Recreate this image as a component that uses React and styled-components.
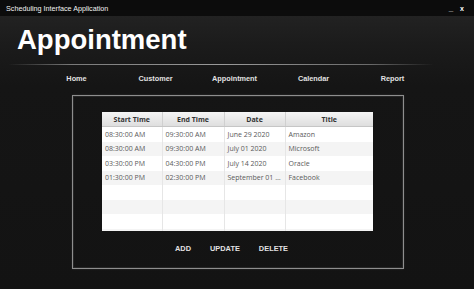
import React from "react"
import styled, { createGlobalStyle } from "styled-components"

const GlobalStyle = createGlobalStyle`
  html, body {
    margin: 0;
    padding: 0;
    background: #131313;
  }
`;

const Window = styled.div`
  width: 474px;
  height: 289px;
  display: flex;
  flex-direction: column;
  overflow: hidden;
  font-family: "Liberation Sans", Arial, sans-serif;
`;

const TitleBar = styled.div`
  height: 16px;
  flex: none;
  display: flex;
  align-items: center;
  justify-content: space-between;
  padding: 0 10px 0 6px;
  background: #0c0c0c;
  color: #f2f2f2;
  font-size: 7.2px;
`;

const WinButtons = styled.div`
  display: flex;
  align-items: center;
  gap: 7px;
`;

const WinButton = styled.span`
  color: #fff;
  font-weight: bold;
  font-size: ${({ size }) => size || 8}px;
  line-height: 1;
  position: relative;
  top: ${({ drop }) => drop || 0}px;
`;

const Main = styled.div`
  flex: 1;
  display: flex;
  flex-direction: column;
  background: linear-gradient(#222222 0px, #1b1b1b 30px, #151515 70px, #131313 100%);
`;

const Heading = styled.h1`
  margin: 10px 0 0 17px;
  font-size: 27.5px;
  line-height: 28px;
  font-weight: bold;
  color: #fff;
`;

const Divider = styled.div`
  height: 1px;
  margin: 10px 40px 0 8px;
  background: linear-gradient(90deg, rgba(130,130,130,0) 0%, #7a7a7a 15%, #9a9a9a 50%, #6a6a6a 85%, rgba(100,100,100,0) 100%);
`;

const Nav = styled.nav`
  margin: 9px 0 0 37px;
  display: grid;
  grid-template-columns: repeat(5, 79px);
`;

const NavItem = styled.a`
  text-align: center;
  font-size: 7.3px;
  line-height: 10px;
  font-weight: bold;
  color: #e2e2e2;
  text-decoration: none;
`;

const Panel = styled.div`
  margin: 11px 0 0 72px;
  width: 332px;
  height: 174px;
  box-sizing: border-box;
  border: 1px solid #8e8e8e;
  box-shadow: inset 0 0 0 1px #262626, 0 0 2px rgba(255,255,255,0.12);
  padding: 16px 30px 0 29px;
  display: flex;
  flex-direction: column;
`;

const TableBox = styled.div`
  height: 119px;
  background: #fff;
  overflow: hidden;
`;

const Table = styled.table`
  width: 100%;
  border-collapse: collapse;
  table-layout: fixed;
  font-family: "Open Sans", "Noto Sans", sans-serif;
`;

const Th = styled.th`
  height: 14px;
  padding: 0;
  font-size: 7px;
  font-weight: bold;
  color: #333;
  text-align: center;
  background: linear-gradient(#f4f4f4, #dedede);
  border-right: 1px solid #d0d0d0;
  border-bottom: 1px solid #c6c6c6;
  &:last-child { border-right: none; }
`;

const Row = styled.tr`
  background: ${({ odd }) => (odd ? "#f4f4f4" : "#ffffff")};
`;

const Td = styled.td`
  height: 14.5px;
  padding: 0 1px 0 3px;
  font-size: 7px;
  color: #5a5a5a;
  white-space: nowrap;
  overflow: hidden;
  text-overflow: ellipsis;
  border-right: 1px solid #e6e6e6;
  &:last-child { border-right: none; }
`;

const Actions = styled.div`
  display: flex;
  gap: 19px;
  padding-left: 73px;
  margin-top: 13px;
`;

const Action = styled.button`
  background: none;
  border: none;
  padding: 0;
  font-family: "Liberation Sans", Arial, sans-serif;
  font-size: 7.4px;
  line-height: 10px;
  font-weight: bold;
  color: #e2e2e2;
`;

const appointments = [
  ["08:30:00 AM", "09:30:00 AM", "June 29 2020", "Amazon"],
  ["08:30:00 AM", "09:30:00 AM", "July 01 2020", "Microsoft"],
  ["03:30:00 PM", "04:30:00 PM", "July 14 2020", "Oracle"],
  ["01:30:00 PM", "02:30:00 PM", "September 01 2020", "Facebook"],
];

const emptyRows = 4;

export default function App() {
  const rows = [...appointments, ...Array(emptyRows).fill(["", "", "", ""])];
  return (
    <>
      <GlobalStyle />
      <Window>
        <TitleBar>
          <span>Scheduling Interface Application</span>
          <WinButtons>
            <WinButton drop={1}>_</WinButton>
            <WinButton size={7}>x</WinButton>
          </WinButtons>
        </TitleBar>
        <Main>
          <Heading>Appointment</Heading>
          <Divider />
          <Nav>
            <NavItem>Home</NavItem>
            <NavItem>Customer</NavItem>
            <NavItem>Appointment</NavItem>
            <NavItem>Calendar</NavItem>
            <NavItem>Report</NavItem>
          </Nav>
          <Panel>
            <TableBox>
              <Table>
                <colgroup>
                  <col style={{ width: 60 }} />
                  <col style={{ width: 62 }} />
                  <col style={{ width: 61 }} />
                  <col />
                </colgroup>
                <thead>
                  <tr>
                    <Th>Start Time</Th>
                    <Th>End Time</Th>
                    <Th>Date</Th>
                    <Th>Title</Th>
                  </tr>
                </thead>
                <tbody>
                  {rows.map((r, i) => (
                    <Row key={i} odd={i % 2 === 1}>
                      {r.map((c, j) => (
                        <Td key={j}>{c}</Td>
                      ))}
                    </Row>
                  ))}
                </tbody>
              </Table>
            </TableBox>
            <Actions>
              <Action>ADD</Action>
              <Action>UPDATE</Action>
              <Action>DELETE</Action>
            </Actions>
          </Panel>
        </Main>
      </Window>
    </>
  );
}
